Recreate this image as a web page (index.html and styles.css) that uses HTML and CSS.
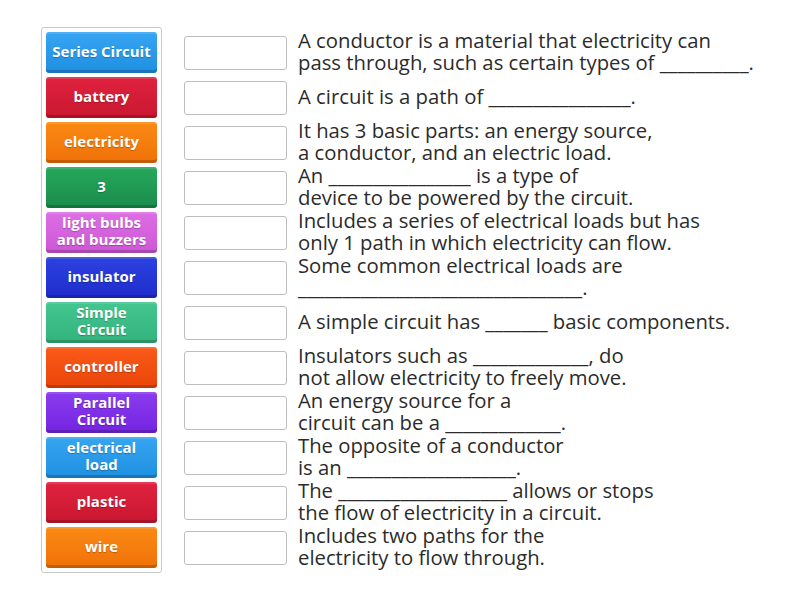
FILE: index.html
```html
<!DOCTYPE html>
<html>
<head>
<meta charset="utf-8">
<link rel="stylesheet" href="styles.css">
</head>
<body>
<div class="game">
  <div class="bank">
    <div class="tile blue">Series Circuit</div>
    <div class="tile red">battery</div>
    <div class="tile orange">electricity</div>
    <div class="tile green">3</div>
    <div class="tile pink">light bulbs and buzzers</div>
    <div class="tile indigo">insulator</div>
    <div class="tile teal">Simple Circuit</div>
    <div class="tile vermilion">controller</div>
    <div class="tile purple">Parallel Circuit</div>
    <div class="tile blue">electrical load</div>
    <div class="tile red">plastic</div>
    <div class="tile orange">wire</div>
  </div>
  <div class="rows">
    <div class="row"><div class="slot"></div><div class="clue">A conductor is a material that electricity can<br>pass through, such as certain types of __________.</div></div>
    <div class="row"><div class="slot"></div><div class="clue">A circuit is a path of ________________.</div></div>
    <div class="row"><div class="slot"></div><div class="clue">It has 3 basic parts: an energy source,<br>a conductor, and an electric load.</div></div>
    <div class="row"><div class="slot"></div><div class="clue">An ________________ is a type of<br>device to be powered by the circuit.</div></div>
    <div class="row"><div class="slot"></div><div class="clue">Includes a series of electrical loads but has<br>only 1 path in which electricity can flow.</div></div>
    <div class="row"><div class="slot"></div><div class="clue">Some common electrical loads are<br>________________________________.</div></div>
    <div class="row"><div class="slot"></div><div class="clue">A simple circuit has _______ basic components.</div></div>
    <div class="row"><div class="slot"></div><div class="clue">Insulators such as _____________, do<br>not allow electricity to freely move.</div></div>
    <div class="row"><div class="slot"></div><div class="clue">An energy source for a<br>circuit can be a _____________.</div></div>
    <div class="row"><div class="slot"></div><div class="clue">The opposite of a conductor<br>is an ___________________.</div></div>
    <div class="row"><div class="slot"></div><div class="clue">The ___________________ allows or stops<br>the flow of electricity in a circuit.</div></div>
    <div class="row"><div class="slot"></div><div class="clue">Includes two paths for the<br>electricity to flow through.</div></div>
  </div>
</div>
</body>
</html>
```
FILE: styles.css
```css
html, body {
  margin: 0;
  padding: 0;
  background: #fff;
}
body {
  font-family: "Open Sans", "Noto Sans", sans-serif;
  color: #333;
}
.game {
  display: flex;
  align-items: flex-start;
  padding: 27px 0 0 41px;
}
.bank {
  width: 111px;
  padding: 4px;
  border: 1px solid #c8c8c8;
  border-radius: 3px;
  display: flex;
  flex-direction: column;
  gap: 4px;
}
.tile {
  height: 41px;
  border-radius: 3px;
  color: #fff;
  font-weight: 700;
  font-size: 15px;
  line-height: 17px;
  text-align: center;
  display: flex;
  align-items: center;
  justify-content: center;
  padding: 0 4px 3px;
  box-sizing: border-box;
  text-shadow: 0 1px 1px rgba(0,0,0,0.25);
  box-shadow: inset 0 -3px 0 rgba(0,0,0,0.18), inset 0 2px 0 rgba(255,255,255,0.12);
}
.blue { background: linear-gradient(#36a5f2, #1f8fe0); }
.red { background: linear-gradient(#e0223f, #c9172f); }
.orange { background: linear-gradient(#fb8a14, #f07108); }
.green { background: linear-gradient(#26a85c, #1a8c4a); }
.pink { background: linear-gradient(#dc6ee4, #cc57d6); }
.indigo { background: linear-gradient(#2c42e0, #1f2ccc); }
.teal { background: linear-gradient(#44c690, #33b37c); }
.vermilion { background: linear-gradient(#fb5a18, #ea450a); }
.purple { background: linear-gradient(#8a3cee, #7424e0); }
.rows {
  margin-left: 22px;
  padding-top: 3px;
  display: flex;
  flex-direction: column;
}
.row {
  height: 45px;
  display: flex;
  align-items: center;
}
.slot {
  width: 103px;
  height: 34px;
  box-sizing: border-box;
  border: 1px solid #bdbdbd;
  border-radius: 3px;
  flex: none;
}
.clue {
  margin-left: 11px;
  margin-top: -4px;
  width: 480px;
  font-size: 20.3px;
  line-height: 22px;
  color: #2b2b2b;
  white-space: nowrap;
}
```
